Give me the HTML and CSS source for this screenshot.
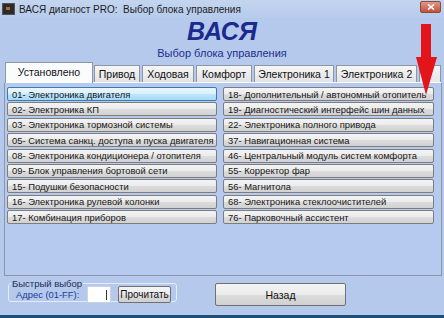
FILE: index.html
```html
<!DOCTYPE html>
<html lang="ru">
<head>
    <meta charset="UTF-8">
    <meta name="viewport" content="width=device-width, initial-scale=1.0">
    <title>ВАСЯ диагност PRO</title>
    <link rel="stylesheet" href="styles.css">
</head>
<body>
<div class="window">
    <div class="titlebar">
        <span class="app-icon"><span class="app-icon-dot"></span></span>
        <span class="title-text">ВАСЯ диагност PRO:&nbsp; Выбор блока управления</span>
        <span class="close-btn">
            <svg width="8" height="6" viewBox="0 0 8 6"><path d="M1 0.5 L7 5.5 M7 0.5 L1 5.5" stroke="#fff" stroke-width="1.6"/></svg>
        </span>
    </div>

    <h1 class="brand">ВАСЯ</h1>
    <div class="subtitle">Выбор блока управления</div>

    <div class="tabs">
        <div class="tab active t1">Установлено</div>
        <div class="tab t2">Привод</div>
        <div class="tab t3">Ходовая</div>
        <div class="tab t4">Комфорт</div>
        <div class="tab t5">Электроника 1</div>
        <div class="tab t6">Электроника 2</div>
        <div class="tab tab-more"></div>
    </div>

    <div class="panel">
        <div class="grid">
            <button class="unit focused">01- Электроника двигателя</button>
            <button class="unit">02- Электроника КП</button>
            <button class="unit">03- Электроника тормозной системы</button>
            <button class="unit">05- Система санкц. доступа и пуска двигателя</button>
            <button class="unit">08- Электроника кондиционера / отопителя</button>
            <button class="unit">09- Блок управления бортовой сети</button>
            <button class="unit">15- Подушки безопасности</button>
            <button class="unit">16- Электроника рулевой колонки</button>
            <button class="unit">17- Комбинация приборов</button>
            <button class="unit">18- Дополнительный / автономный отопитель</button>
            <button class="unit">19- Диагностический интерфейс шин данных</button>
            <button class="unit">22- Электроника полного привода</button>
            <button class="unit">37- Навигационная система</button>
            <button class="unit">46- Центральный модуль систем комфорта</button>
            <button class="unit">55- Корректор фар</button>
            <button class="unit">56- Магнитола</button>
            <button class="unit">68- Электроника стеклоочистителей</button>
            <button class="unit">76- Парковочный ассистент</button>
        </div>
    </div>

    <div class="footer">
        <fieldset class="quick">
            <legend>Быстрый выбор</legend>
            <label for="addr">Адрес (01-FF):</label>
            <span class="addr-box" id="addr"><span class="caret"></span></span>
            <button class="btn small">Прочитать</button>
        </fieldset>
        <button class="btn back">Назад</button>
    </div>

    <div class="taskbar"></div>

    <svg class="arrow" width="24" height="72" viewBox="0 0 24 72">
        <path d="M6 0 L16 0 L16 33 L22 33 L11 71 L1 33 L6 33 Z" fill="#e3141a"/>
    </svg>
</div>
</body>
</html>
```

FILE: styles.css
```css
html, body {
    margin: 0;
    padding: 0;
}

body {
    font-family: "Liberation Sans", Arial, sans-serif;
    background: #b4c9ec;
}

.window {
    position: relative;
    width: 444px;
    height: 318px;
    display: flex;
    flex-direction: column;
    background: #b4c9ec;
    overflow: hidden;
}

/* title bar */
.titlebar {
    height: 18px;
    display: flex;
    align-items: center;
    padding-left: 2px;
    background: linear-gradient(#c3d5ee, #b7cbec);
    font-size: 10px;
    color: #1b1b1b;
}

.app-icon {
    width: 11px;
    height: 10px;
    background: #2b2b2b;
    border: 1px solid #555;
    margin-right: 4px;
    position: relative;
}

.app-icon-dot {
    position: absolute;
    left: 3px;
    top: 3px;
    width: 4px;
    height: 3px;
    background: #b06a30;
}

.title-text {
    flex: 1;
}

.close-btn {
    width: 19px;
    height: 10px;
    margin-right: 3px;
    margin-top: -4px;
    border: 1px solid #8a4a3c;
    border-radius: 2px;
    background: linear-gradient(#e09a88, #c4503a);
    display: flex;
    align-items: center;
    justify-content: center;
}

/* header */
.brand {
    margin: 1px 0 0;
    height: 24px;
    line-height: 24px;
    text-align: center;
    font-size: 25px;
    font-style: italic;
    font-weight: bold;
    color: #1b2a8c;
}

.subtitle {
    margin-top: 3px;
    height: 14px;
    line-height: 14px;
    text-align: center;
    font-size: 11px;
    color: #1e2f8a;
}

/* tabs */
.tabs {
    margin-top: 2px;
    height: 20px;
    display: flex;
    align-items: flex-end;
    padding-left: 5px;
    position: relative;
    z-index: 1;
}

.tab {
    flex: none;
    box-sizing: border-box;
    height: 17px;
    line-height: 16px;
    margin-right: 2px;
    text-align: center;
    white-space: nowrap;
    font-size: 10.5px;
    color: #111;
    background: linear-gradient(#f6f6f6, #e3e3e3);
    border: 1px solid #8d96a4;
    border-bottom: none;
}

.tab.active {
    height: 21px;
    line-height: 18px;
    background: #fafbfd;
    margin-right: 1px;
    margin-bottom: -1px;
}

.t1 { width: 88px; }
.t2 { width: 46px; }
.t3 { width: 52px; }
.t4 { width: 56px; }
.t5 { width: 80px; }
.t6 { width: 81px; }

.tab-more {
    width: 22px;
    background: linear-gradient(#f4f4f4, #e8e8e8);
}

/* main panel */
.panel {
    margin: 0 2px 0 4px;
    height: 194px;
    border: 1px solid #8d96a4;
    border-top-color: #fbfcfd;
    background: #b5caee;
    padding: 4px 0 0 2px;
    box-sizing: border-box;
}

.grid {
    display: grid;
    grid-auto-flow: column;
    grid-template-rows: repeat(9, 14px);
    grid-template-columns: 210px 211px;
    column-gap: 6px;
    row-gap: 1.4px;
}

.unit {
    height: 14px;
    padding: 0 0 0 4px;
    margin: 0;
    text-align: left;
    font-family: "Liberation Sans", Arial, sans-serif;
    font-size: 9.4px;
    color: #161616;
    background: linear-gradient(#f4f4f4 0%, #ebebeb 50%, #dcdcdc 51%, #d2d2d2 100%);
    border: 1px solid #7d7d7d;
    border-radius: 2px;
    white-space: nowrap;
    overflow: hidden;
}

.unit.focused {
    border-color: #3d7bad;
    background: linear-gradient(#eaf6fd 0%, #d9f0fc 50%, #bee6fd 51%, #a7d9f5 100%);
}

/* footer */
.footer {
    flex: 1;
    display: flex;
    align-items: flex-start;
    padding: 2px 0 0 8px;
}

.quick {
    margin: 0;
    padding: 0 0 2px 7px;
    width: 160px;
    height: 20px;
    border: 1px solid #e6ecf6;
    border-radius: 3px;
    display: flex;
    align-items: center;
}

.quick legend {
    padding: 0 1px;
    margin-left: -5px;
    font-size: 9.5px;
    color: #1f2b55;
}

.quick label {
    font-size: 9.4px;
    color: #1e3a9a;
    width: 71px;
}

.addr-box {
    width: 22px;
    height: 15px;
    background: #fff;
    border: 1px solid #c8d3e4;
    position: relative;
    margin-right: 7px;
}

.caret {
    position: absolute;
    right: 3px;
    top: 3px;
    width: 1px;
    height: 10px;
    background: #333;
}

.btn {
    font-family: "Liberation Sans", Arial, sans-serif;
    font-size: 10px;
    color: #111;
    background: linear-gradient(#f4f4f4 0%, #ebebeb 50%, #dcdcdc 51%, #d0d0d0 100%);
    border: 1px solid #707070;
    border-radius: 2px;
    padding: 0;
}

.btn.small {
    width: 53px;
    height: 17px;
}

.btn.back {
    width: 131px;
    height: 23px;
    margin: 5px 0 0 38px;
    font-size: 10.5px;
}

.taskbar {
    height: 3px;
    background: #1d4f78;
}

.arrow {
    position: absolute;
    left: 415px;
    top: 24px;
    z-index: 2;
}
```
